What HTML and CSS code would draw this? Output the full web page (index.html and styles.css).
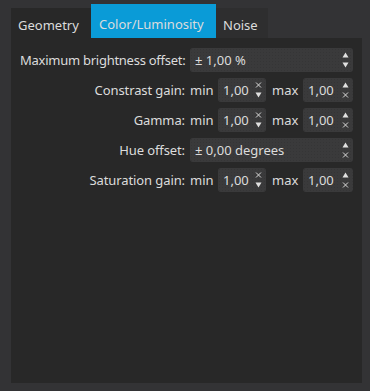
FILE: index.html
```html
<!DOCTYPE html>
<html>
<head>
<meta charset="utf-8">
<link rel="stylesheet" href="styles.css">
</head>
<body>
<div class="wrap">
  <div class="tabs">
    <div class="tab tab-plain">Geometry</div>
    <div class="tab tab-active">Color/Luminosity</div>
    <div class="tab tab-inactive">Noise</div>
  </div>
  <div class="panel">
    <div class="form">
      <div class="label label-long">Maximum brightness offset:</div>
      <div class="field">
        <div class="spin spin-wide"><span class="val">± 1,00 %</span>
          <span class="arrows"><svg viewBox="0 0 7 6"><path d="M3.5 0.5 L6.5 5.5 L0.5 5.5 Z"/></svg><svg viewBox="0 0 7 6"><path d="M0.5 0.5 L6.5 0.5 L3.5 5.5 Z"/></svg></span></div>
      </div>

      <div class="label">Constrast gain:</div>
      <div class="field">
        <span class="sub">min</span>
        <div class="spin spin-min"><span class="val">1,00</span>
          <span class="arrows"><svg viewBox="0 0 7 6"><path class="x" d="M1 0.5 L6 5.5 M6 0.5 L1 5.5"/></svg><svg viewBox="0 0 7 6"><path d="M0.5 0.5 L6.5 0.5 L3.5 5.5 Z"/></svg></span></div>
        <span class="sub sub-max">max</span>
        <div class="spin spin-max"><span class="val">1,00</span>
          <span class="arrows"><svg viewBox="0 0 7 6"><path d="M3.5 0.5 L6.5 5.5 L0.5 5.5 Z"/></svg><svg viewBox="0 0 7 6"><path class="x" d="M1 0.5 L6 5.5 M6 0.5 L1 5.5"/></svg></span></div>
      </div>

      <div class="label">Gamma:</div>
      <div class="field">
        <span class="sub">min</span>
        <div class="spin spin-min"><span class="val">1,00</span>
          <span class="arrows"><svg viewBox="0 0 7 6"><path class="x" d="M1 0.5 L6 5.5 M6 0.5 L1 5.5"/></svg><svg viewBox="0 0 7 6"><path d="M0.5 0.5 L6.5 0.5 L3.5 5.5 Z"/></svg></span></div>
        <span class="sub sub-max">max</span>
        <div class="spin spin-max"><span class="val">1,00</span>
          <span class="arrows"><svg viewBox="0 0 7 6"><path d="M3.5 0.5 L6.5 5.5 L0.5 5.5 Z"/></svg><svg viewBox="0 0 7 6"><path class="x" d="M1 0.5 L6 5.5 M6 0.5 L1 5.5"/></svg></span></div>
      </div>

      <div class="label">Hue offset:</div>
      <div class="field">
        <div class="spin spin-wide"><span class="val">± 0,00 degrees</span>
          <span class="arrows"><svg viewBox="0 0 7 6"><path d="M3.5 0.5 L6.5 5.5 L0.5 5.5 Z"/></svg><svg viewBox="0 0 7 6"><path class="x" d="M1 0.5 L6 5.5 M6 0.5 L1 5.5"/></svg></span></div>
      </div>

      <div class="label">Saturation gain:</div>
      <div class="field">
        <span class="sub">min</span>
        <div class="spin spin-min"><span class="val">1,00</span>
          <span class="arrows"><svg viewBox="0 0 7 6"><path class="x" d="M1 0.5 L6 5.5 M6 0.5 L1 5.5"/></svg><svg viewBox="0 0 7 6"><path d="M0.5 0.5 L6.5 0.5 L3.5 5.5 Z"/></svg></span></div>
        <span class="sub sub-max">max</span>
        <div class="spin spin-max"><span class="val">1,00</span>
          <span class="arrows"><svg viewBox="0 0 7 6"><path d="M3.5 0.5 L6.5 5.5 L0.5 5.5 Z"/></svg><svg viewBox="0 0 7 6"><path class="x" d="M1 0.5 L6 5.5 M6 0.5 L1 5.5"/></svg></span></div>
      </div>
    </div>
  </div>
</div>
</body>
</html>
```

FILE: styles.css
```css
html, body {
  margin: 0;
  padding: 0;
  background: #333335;
  width: 370px;
  height: 391px;
  overflow: hidden;
}
body {
  font-family: "Noto Sans", "DejaVu Sans", sans-serif;
  font-size: 13px;
  color: #dcdcdc;
}
.wrap {
  padding: 4px 8px 8px 11px;
  display: flex;
  flex-direction: column;
  height: 391px;
  box-sizing: border-box;
}
.tabs {
  display: flex;
  align-items: flex-end;
  height: 34px;
}
.tab {
  height: 30px;
  line-height: 34px;
  box-sizing: border-box;
}
.tab-plain {
  width: 80px;
  background: #282828;
  padding-left: 7px;
}
.tab-active {
  width: 125px;
  height: 34px;
  line-height: 41px;
  background: #0a9bd7;
  padding-left: 8px;
}
.tab-inactive {
  width: 52px;
  background: #2e2e2f;
  padding-left: 7px;
}
.panel {
  flex: 1;
  background: #282828;
  padding: 10px 9px;
}
.form {
  display: grid;
  grid-template-columns: 165px 163px;
  column-gap: 5px;
  row-gap: 6px;
  grid-auto-rows: 24px;
}
.label {
  text-align: right;
  line-height: 24px;
  white-space: nowrap;
  letter-spacing: -0.1px;
}
.label-long {
  letter-spacing: -0.26px;
}
.field {
  display: flex;
  align-items: center;
}
.sub {
  width: 28px;
  line-height: 24px;
}
.sub-max {
  width: 31px;
  padding-left: 6px;
}
.spin {
  height: 24px;
  background-color: #3a3a3b;
  background-image: radial-gradient(#353536 0.6px, transparent 0.7px);
  background-size: 3px 3px;
  border-radius: 3px;
  display: flex;
  align-items: center;
  justify-content: space-between;
  padding: 0 4px 0 5px;
  box-sizing: border-box;
  line-height: 24px;
}
.spin-wide { width: 163px; }
.spin-min { width: 48px; }
.spin-max { width: 50px; }
.val { white-space: nowrap; }
.arrows {
  display: flex;
  flex-direction: column;
  justify-content: space-between;
  height: 16px;
}
.arrows svg {
  width: 7px;
  height: 6px;
  display: block;
}
.arrows path {
  fill: #e0e0e0;
}
.arrows path.x {
  fill: none;
  stroke: #d8d8d8;
  stroke-width: 1;
}
```
